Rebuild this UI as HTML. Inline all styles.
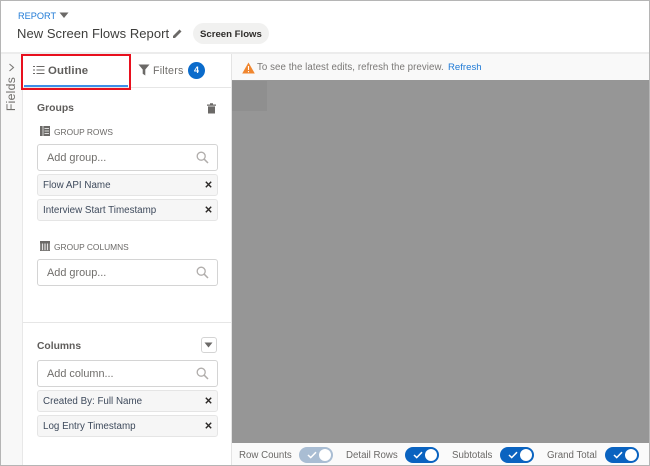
<!DOCTYPE html>
<html><head><meta charset="utf-8">
<style>
html,body{margin:0;padding:0;background:#fff}
#p{position:relative;width:650px;height:466px;overflow:hidden;background:#fff;font-family:"Liberation Sans",sans-serif;color:#3e3e3c}
#p div,#p span.a,#p svg{position:absolute}
.t{white-space:nowrap;line-height:14px}
.in{left:37px;width:179px;height:25px;border:1px solid #d4d4d4;border-radius:3px;background:#fff}
.ph{font-size:10.9px;color:#706e6b;left:47px}
.pill{left:37px;width:179px;height:20px;border:1px solid #e5e5e5;border-radius:3px;background:#f6f6f6}
.pt{left:43px;font-size:9.8px;color:#3e4a5c}
.lab{font-size:8.4px;color:#6b6967}
.tg{width:34px;height:16px;border-radius:8px;background:#0a63c0;top:447px}
.kn{width:12px;height:12px;border-radius:50%;background:#fff;top:2px;right:2px}
.bt{font-size:9.7px;color:#6b6967;top:449px}
</style></head><body>
<div id="p">
<!-- header -->
<div style="left:0;top:52px;width:650px;height:2px;background:#ececec"></div>
<div class="t" style="left:18px;top:9px;font-size:9.2px;color:#1f7ad6">REPORT</div>
<svg style="left:59px;top:12px" width="11" height="7"><path d="M0.5 0.5H9.5L5 6Z" fill="#6b6967"/></svg>
<div class="t" style="left:17px;top:27px;font-size:13px;color:#3e3e3c;letter-spacing:.05px">New Screen Flows Report</div>
<svg style="left:172px;top:28px" width="11" height="11" viewBox="0 0 11 11"><path d="M1 8L7.5 1.5L9.5 3.5L3 10H1Z" fill="#6b6967"/></svg>
<div style="left:193px;top:23px;width:76px;height:21px;border-radius:11px;background:#f1f1f0"></div>
<div class="t" style="left:200px;top:28px;font-size:9.6px;font-weight:bold;color:#2f2d2b">Screen Flows</div>

<!-- left rail -->
<div style="left:0;top:54px;width:23px;height:412px;background:#f8f8f8;border-right:1px solid #e8e8e8;box-sizing:border-box"></div>
<svg style="left:8px;top:62px" width="7" height="11"><path d="M1.5 2L5.5 5.5L1.5 9" fill="none" stroke="#7a7876" stroke-width="1.1"/></svg>
<div class="t" style="left:-9px;top:87px;width:40px;height:14px;font-size:12.2px;color:#706e6b;transform:rotate(-90deg);text-align:center;letter-spacing:.3px">Fields</div>

<!-- tabs -->
<div style="left:24px;top:85px;width:104px;height:3px;background:#3e8ee8"></div>
<div style="left:23px;top:87px;width:208px;height:1px;background:#e6e6e6"></div>
<div style="left:21px;top:54px;width:110px;height:36px;box-sizing:border-box;border:2px solid #e8101e"></div>
<svg style="left:33px;top:65px" width="12" height="10"><path d="M0 1.5H2M3.5 1.5H11.5M0 5H2M3.5 5H11.5M0 8.5H2M3.5 8.5H11.5" stroke="#6b6967" stroke-width="1.1" fill="none"/></svg>
<div class="t" style="left:48px;top:64px;font-size:11.4px;font-weight:bold;color:#5f5d5b;letter-spacing:.15px">Outline</div>
<svg style="left:138px;top:64px" width="12" height="12"><path d="M0.5 0.5H11.5L7.3 5.5V11.5L4.7 9.8V5.5Z" fill="#6b6967"/></svg>
<div class="t" style="left:153px;top:64px;font-size:10.7px;color:#706e6b;letter-spacing:.2px">Filters</div>
<div style="left:188px;top:62px;width:17px;height:17px;border-radius:50%;background:#0a6bcb"></div>
<div class="t" style="left:188px;top:63px;width:17px;text-align:center;font-size:9px;font-weight:bold;color:#fff">4</div>
<div style="left:231px;top:54px;width:1px;height:412px;background:#e4e4e4"></div>

<!-- groups -->
<div class="t" style="left:37px;top:102px;font-size:10.4px;font-weight:bold;color:#5f5d5b">Groups</div>
<svg style="left:207px;top:103px" width="9" height="11" viewBox="0 0 9 11"><path d="M0 1.5H9V2.7H0ZM3 .2H6V1.5H3ZM1 3.4H8V10.5H1Z" fill="#6b6967"/></svg>
<svg style="left:40px;top:126px" width="10" height="10"><rect width="10" height="10" fill="#6b6967"/><path d="M3 0V10M4.5 2.5H9M4.5 5H9M4.5 7.5H9" stroke="#fff" stroke-width=".7"/></svg>
<div class="t lab" style="left:54px;top:125px">GROUP ROWS</div>
<div class="in" style="top:144px"></div>
<div class="t ph" style="top:151px">Add group...</div>
<svg style="left:196px;top:151px" width="13" height="13"><circle cx="5.2" cy="5.2" r="4" fill="none" stroke="#b0adab" stroke-width="1.3"/><path d="M8.2 8.2L12 12" stroke="#b0adab" stroke-width="1.5"/></svg>
<div class="pill" style="top:174px"></div>
<div class="t pt" style="top:179px">Flow API Name</div>
<svg style="left:205px;top:181px" width="7" height="7"><path d="M.8 .8L6.2 6.2M6.2 .8L.8 6.2" stroke="#2b2826" stroke-width="1.4"/></svg>
<div class="pill" style="top:199px"></div>
<div class="t pt" style="top:204px">Interview Start Timestamp</div>
<svg style="left:205px;top:206px" width="7" height="7"><path d="M.8 .8L6.2 6.2M6.2 .8L.8 6.2" stroke="#2b2826" stroke-width="1.4"/></svg>

<svg style="left:40px;top:241px" width="10" height="10"><rect width="10" height="10" fill="#6b6967"/><path d="M.8 2.5H9.2V9.2H.8Z" fill="#fff"/><path d="M1.6 2.5V9.2M3.4 2.5V9.2M5 2.5V9.2M6.6 2.5V9.2M8.4 2.5V9.2" stroke="#6b6967" stroke-width="1"/></svg>
<div class="t lab" style="left:54px;top:240px">GROUP COLUMNS</div>
<div class="in" style="top:259px"></div>
<div class="t ph" style="top:266px">Add group...</div>
<svg style="left:196px;top:266px" width="13" height="13"><circle cx="5.2" cy="5.2" r="4" fill="none" stroke="#b0adab" stroke-width="1.3"/><path d="M8.2 8.2L12 12" stroke="#b0adab" stroke-width="1.5"/></svg>

<!-- columns -->
<div style="left:23px;top:322px;width:208px;height:1px;background:#e6e6e6"></div>
<div class="t" style="left:37px;top:340px;font-size:10.3px;font-weight:bold;color:#5f5d5b">Columns</div>
<div style="left:201px;top:337px;width:16px;height:16px;box-sizing:border-box;border:1px solid #d4d4d4;border-radius:3px;background:#fff"></div>
<svg style="left:204px;top:342px" width="10" height="6"><path d="M.5 .5H8.5L4.5 5.5Z" fill="#6b6967"/></svg>
<div class="in" style="top:360px"></div>
<div class="t ph" style="top:367px">Add column...</div>
<svg style="left:196px;top:367px" width="13" height="13"><circle cx="5.2" cy="5.2" r="4" fill="none" stroke="#b0adab" stroke-width="1.3"/><path d="M8.2 8.2L12 12" stroke="#b0adab" stroke-width="1.5"/></svg>
<div class="pill" style="top:390px"></div>
<div class="t pt" style="top:395px">Created By: Full Name</div>
<svg style="left:205px;top:397px" width="7" height="7"><path d="M.8 .8L6.2 6.2M6.2 .8L.8 6.2" stroke="#2b2826" stroke-width="1.4"/></svg>
<div class="pill" style="top:415px"></div>
<div class="t pt" style="top:420px">Log Entry Timestamp</div>
<svg style="left:205px;top:422px" width="7" height="7"><path d="M.8 .8L6.2 6.2M6.2 .8L.8 6.2" stroke="#2b2826" stroke-width="1.4"/></svg>

<!-- preview -->
<div style="left:232px;top:54px;width:418px;height:27px;background:#f9f9f9"></div>
<svg style="left:242px;top:62px" width="13" height="12"><path d="M6.5 .5L12.8 11.5H.2Z" fill="#f0862f"/><path d="M6.5 4V8M6.5 9V10.3" stroke="#fff" stroke-width="1.1"/></svg>
<div class="t" style="left:257px;top:61px;font-size:9.7px;color:#7a7876;letter-spacing:.07px">To see the latest edits, refresh the preview.</div>
<div class="t" style="left:448px;top:61px;font-size:9.6px;color:#1f7ad6">Refresh</div>
<div style="left:232px;top:80px;width:418px;height:363px;background:#969696"></div>
<div style="left:232px;top:81px;width:35px;height:30px;background:#8f8f8f"></div>

<!-- footer -->
<div style="left:232px;top:443px;width:418px;height:23px;background:#fafafa"></div>
<div class="t bt" style="left:239px">Row Counts</div>
<div class="tg" style="left:299px;background:#a9bdd3"><div class="kn"></div><svg style="left:8px;top:4px" width="10" height="8"><path d="M1 4L3.7 6.6L9 1.2" fill="none" stroke="#fff" stroke-width="1.5"/></svg></div>
<div class="t bt" style="left:346px">Detail Rows</div>
<div class="tg" style="left:405px"><div class="kn"></div><svg style="left:8px;top:4px" width="10" height="8"><path d="M1 4L3.7 6.6L9 1.2" fill="none" stroke="#fff" stroke-width="1.5"/></svg></div>
<div class="t bt" style="left:452px">Subtotals</div>
<div class="tg" style="left:500px"><div class="kn"></div><svg style="left:8px;top:4px" width="10" height="8"><path d="M1 4L3.7 6.6L9 1.2" fill="none" stroke="#fff" stroke-width="1.5"/></svg></div>
<div class="t bt" style="left:547px">Grand Total</div>
<div class="tg" style="left:605px"><div class="kn"></div><svg style="left:8px;top:4px" width="10" height="8"><path d="M1 4L3.7 6.6L9 1.2" fill="none" stroke="#fff" stroke-width="1.5"/></svg></div>

<!-- outer frame -->
<div style="left:0;top:0;width:650px;height:466px;box-sizing:border-box;border:1px solid #b5b5b5"></div>
</div>
</body></html>
